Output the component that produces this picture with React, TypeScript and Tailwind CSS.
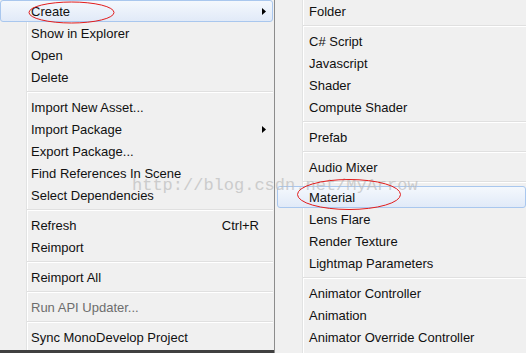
import React from "react";

type Item =
  | { sep: true }
  | { label: string; shortcut?: string; sub?: boolean; disabled?: boolean; active?: boolean };

const leftItems: Item[] = [
  { label: "Create", sub: true, active: true },
  { label: "Show in Explorer" },
  { label: "Open" },
  { label: "Delete" },
  { sep: true },
  { label: "Import New Asset..." },
  { label: "Import Package", sub: true },
  { label: "Export Package..." },
  { label: "Find References In Scene" },
  { label: "Select Dependencies" },
  { sep: true },
  { label: "Refresh", shortcut: "Ctrl+R" },
  { label: "Reimport" },
  { sep: true },
  { label: "Reimport All" },
  { sep: true },
  { label: "Run API Updater...", disabled: true },
  { sep: true },
  { label: "Sync MonoDevelop Project" },
];

const rightItems: Item[] = [
  { label: "Folder" },
  { sep: true },
  { label: "C# Script" },
  { label: "Javascript" },
  { label: "Shader" },
  { label: "Compute Shader" },
  { sep: true },
  { label: "Prefab" },
  { sep: true },
  { label: "Audio Mixer" },
  { sep: true },
  { label: "Material", active: true },
  { label: "Lens Flare" },
  { label: "Render Texture" },
  { label: "Lightmap Parameters" },
  { sep: true },
  { label: "Animator Controller" },
  { label: "Animation" },
  { label: "Animator Override Controller" },
];

function Arrow() {
  return (
    <svg width="4" height="7" viewBox="0 0 4 7" className="mr-[6px]">
      <path d="M0 0 L4 3.5 L0 7 Z" fill="#000" />
    </svg>
  );
}

function MenuRow({ item, textLeft, sepLeft }: { item: Item; textLeft: string; sepLeft: string }) {
  if ("sep" in item) {
    return (
      <div className={`h-[8px] flex flex-col justify-center ${sepLeft}`}>
        <div className="h-[1px] bg-[#e0e0e0]" />
        <div className="h-[1px] bg-white" />
      </div>
    );
  }
  return (
    <div
      className={`h-[22px] flex items-center justify-between rounded-[3px] border ${
        item.active
          ? "border-[#a9c7ee] bg-[linear-gradient(to_bottom,#f4f8fd,#e1eaf8)]"
          : "border-transparent"
      }`}
    >
      <span
        className={`${textLeft} text-[13px] leading-none ${
          item.disabled ? "text-[#6d6d6d]" : "text-[#111]"
        }`}
      >
        {item.label}
      </span>
      {item.shortcut && <span className="text-[13px] leading-none text-[#111] mr-[13px]">{item.shortcut}</span>}
      {item.sub && <Arrow />}
    </div>
  );
}

export default function App() {
  return (
    <div
      className="relative w-[526px] h-[353px] overflow-hidden bg-[#f0f0f0] flex"
      style={{ fontFamily: '"Liberation Sans", Arial, sans-serif' }}
    >
      {/* Left context menu */}
      <div className="w-[275px] h-[353px] shrink-0 border-r border-[#8c8c8c] bg-[linear-gradient(to_right,#f0f0f0_26px,#e2e3e3_26px,#e2e3e3_27px,#fff_27px,#fff_28px,#f0f0f0_28px)] flex flex-col">
        <div className="flex flex-col pr-[1px]">
          {leftItems.map((it, i) => (
            <MenuRow key={i} item={it} textLeft="pl-[30px]" sepLeft="ml-[27px]" />
          ))}
        </div>
        <div className="flex-1" />
        <div className="h-[3px] bg-[#404040]" />
      </div>

      {/* Create submenu */}
      <div className="flex-1 h-[353px] bg-[linear-gradient(to_right,#f0f0f0_27px,#e2e3e3_27px,#e2e3e3_28px,#fff_28px,#fff_29px,#f0f0f0_29px)] flex flex-col">
        {rightItems.map((it, i) => (
          <div key={i} className={"sep" in it ? "" : "pl-[2px]"}>
            <MenuRow item={it} textLeft="pl-[31px]" sepLeft="ml-[28px]" />
          </div>
        ))}
      </div>

      {/* Watermark */}
      <div
        className="absolute left-[132px] top-[176px] text-[17px] leading-[20px] text-[#bdbdbd] opacity-70 pointer-events-none whitespace-nowrap"
        style={{ fontFamily: '"Liberation Mono", "Courier New", monospace' }}
      >
        http://blog.csdn.net/MyArrow
      </div>

      {/* Annotation ellipses */}
      <svg className="absolute inset-0 pointer-events-none" width="526" height="353">
        <ellipse cx="71.5" cy="12.5" rx="42.5" ry="10.5" fill="none" stroke="#e21c1c" strokeWidth="1" />
        <ellipse cx="349" cy="194.5" rx="51.5" ry="15" fill="none" stroke="#e21c1c" strokeWidth="1" />
      </svg>
    </div>
  );
}
